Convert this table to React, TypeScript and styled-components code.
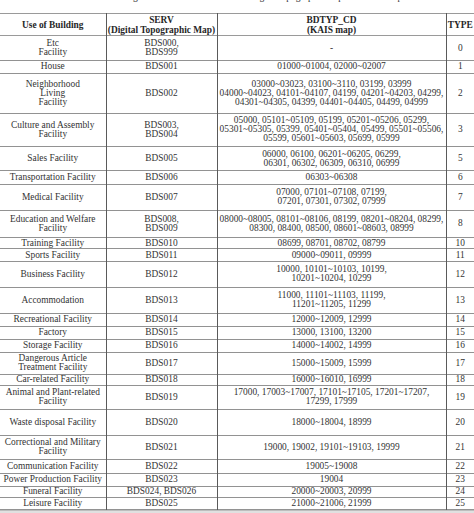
import React from "react";
import styled, { createGlobalStyle } from "styled-components";

const Global = createGlobalStyle`
  html, body { margin: 0; padding: 0; background: #ffffff; }
  body { font-family: "Liberation Serif", "Times New Roman", serif; color: #333333; overflow: hidden; }
`;

const Page = styled.div`
  width: 474px;
  height: 513px;
  overflow: hidden;
`;

const Caption = styled.div`
  margin-top: -7.6px;
  height: 10px;
  line-height: 10px;
  font-size: 9.5px;
  text-align: center;
  white-space: nowrap;
  color: #333;
`;

const Table = styled.table`
  margin-top: 10.5px;
  width: 474px;
  table-layout: fixed;
  border-collapse: collapse;
  font-size: 9.4px;
  line-height: 9px;
  border-top: 1.5px solid #9a9a9a;
`;

const HeadRow = styled.tr`
  height: 22.5px;
  border-bottom: 1.5px solid #9a9a9a;
`;

const HeadCell = styled.th<{ $first?: boolean }>`
  padding: 0;
  font-weight: bold;
  text-align: center;
  vertical-align: middle;
  line-height: 10px;
  white-space: pre;
  color: #262626;
  border-left: ${(p) => (p.$first ? "none" : "1px solid #5a5a5a")};
`;

const Row = styled.tr<{ $h: number }>`
  height: ${(p) => p.$h}px;
  border-bottom: 1px solid #929292;
`;

const Cell = styled.td<{ $first?: boolean }>`
  padding: 0;
  text-align: center;
  vertical-align: middle;
  white-space: pre;
  overflow: visible;
  border-left: ${(p) => (p.$first ? "none" : "1px solid #5a5a5a")};
`;

const Footer = styled.div`
  height: 6px;
  background: #e0e0e0;
  border-top: 1px solid #bdbdbd;
`;

type RowData = [string, string, string, string, number];

const rows: RowData[] = [
  ["Etc\nFacility", "BDS000,\nBDS999", "-", "0", 24.5],
  ["House", "BDS001", "01000~01004, 02000~02007", "1", 13],
  [
    "Neighborhood\nLiving\nFacility",
    "BDS002",
    "03000~03023, 03100~3110, 03199, 03999\n04000~04023, 04101~04107, 04199, 04201~04203, 04299,\n04301~04305, 04399, 04401~04405, 04499, 04999",
    "2",
    40,
  ],
  [
    "Culture and Assembly\nFacility",
    "BDS003,\nBDS004",
    "05000, 05101~05109, 05199, 05201~05206, 05299,\n05301~05305, 05399, 05401~05404, 05499, 05501~05506,\n05599, 05601~05603, 05699, 05999",
    "3",
    33,
  ],
  ["Sales Facility", "BDS005", "06000, 06100, 06201~06205, 06299,\n06301, 06302, 06309, 06310, 06999", "5", 24.3],
  ["Transportation Facility", "BDS006", "06303~06308", "6", 13.4],
  ["Medical Facility", "BDS007", "07000, 07101~07108, 07199,\n07201, 07301, 07302, 07999", "7", 26.3],
  [
    "Education and Welfare\nFacility",
    "BDS008,\nBDS009",
    "08000~08005, 08101~08106, 08199, 08201~08204, 08299,\n08300, 08400, 08500, 08601~08603, 08999",
    "8",
    27,
  ],
  ["Training Facility", "BDS010", "08699, 08701, 08702, 08799", "10", 11.5],
  ["Sports Facility", "BDS011", "09000~09011, 09999", "11", 12.5],
  ["Business Facility", "BDS012", "10000, 10101~10103, 10199,\n10201~10204, 10299", "12", 26],
  ["Accommodation", "BDS013", "11000, 11101~11103, 11199,\n11201~11205, 11299", "13", 26],
  ["Recreational Facility", "BDS014", "12000~12009, 12999", "14", 13],
  ["Factory", "BDS015", "13000, 13100, 13200", "15", 13],
  ["Storage Facility", "BDS016", "14000~14002, 14999", "16", 13],
  ["Dangerous Article\nTreatment Facility", "BDS017", "15000~15009, 15999", "17", 21.7],
  ["Car-related Facility", "BDS018", "16000~16010, 16999", "18", 11.3],
  [
    "Animal and Plant-related\nFacility",
    "BDS019",
    "17000, 17003~17007, 17101~17105, 17201~17207,\n17299, 17999",
    "19",
    24,
  ],
  ["Waste disposal Facility", "BDS020", "18000~18004, 18999", "20", 26],
  ["Correctional and Military\nFacility", "BDS021", "19000, 19002, 19101~19103, 19999", "21", 24],
  ["Communication Facility", "BDS022", "19005~19008", "22", 13.7],
  ["Power Production Facility", "BDS023", "19004", "23", 13.3],
  ["Funeral Facility", "BDS024, BDS026", "20000~20003, 20999", "24", 11],
  ["Leisure Facility", "BDS025", "21000~21006, 21999", "25", 12.3],
];

export default function App() {
  return (
    <Page>
      <Global />
      <Caption>Table 2. Building use classification code of the digital topographic map and KAIS map</Caption>
      <Table>
        <colgroup>
          <col style={{ width: 106 }} />
          <col style={{ width: 111 }} />
          <col style={{ width: 229 }} />
          <col style={{ width: 28 }} />
        </colgroup>
        <thead>
          <HeadRow>
            <HeadCell $first>Use of Building</HeadCell>
            <HeadCell>{"SERV\n(Digital Topographic Map)"}</HeadCell>
            <HeadCell>{"BDTYP_CD\n(KAIS map)"}</HeadCell>
            <HeadCell>TYPE</HeadCell>
          </HeadRow>
        </thead>
        <tbody>
          {rows.map(([name, serv, code, type, h]) => (
            <Row key={type} $h={h}>
              <Cell $first>{name}</Cell>
              <Cell>{serv}</Cell>
              <Cell>{code}</Cell>
              <Cell>{type}</Cell>
            </Row>
          ))}
        </tbody>
      </Table>
      <Footer />
    </Page>
  );
}
